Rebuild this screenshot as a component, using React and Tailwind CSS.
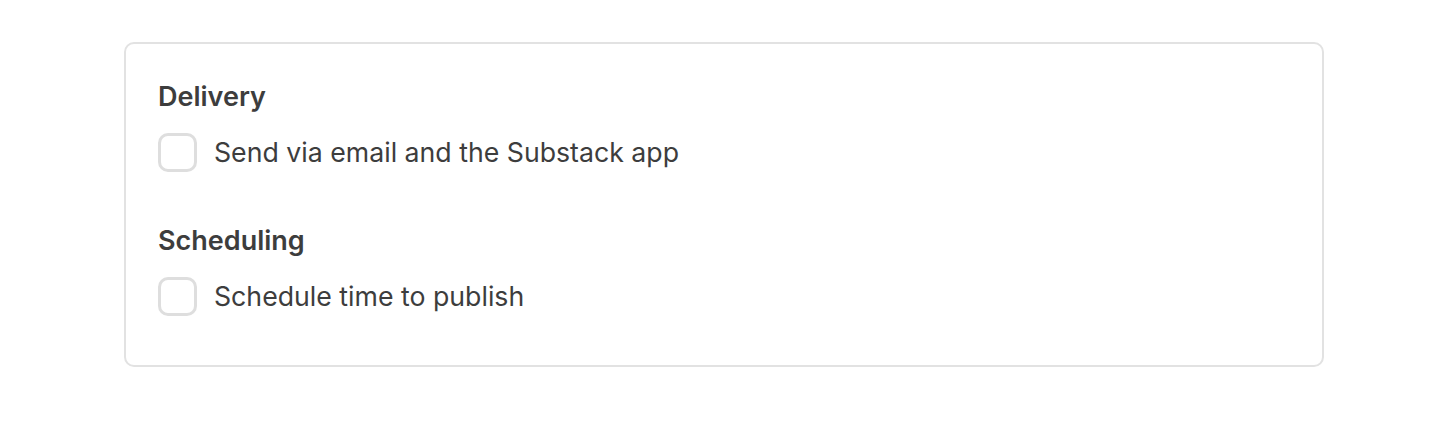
import React from 'react';

const Option = ({ label }) => (
  <label className="flex items-center gap-[17px] cursor-pointer">
    <span className="block h-[39px] w-[39px] shrink-0 rounded-[10px] border-[3px] border-[#dedede] bg-white" />
    <span className="text-[26.7px] leading-[39px] text-[#3d3d3d]">{label}</span>
  </label>
);

const Section = ({ title, label }) => (
  <div className="flex flex-col gap-[20px]">
    <h3 className="text-[27px] font-semibold leading-[32px] text-[#3d3d3d]">{title}</h3>
    <Option label={label} />
  </div>
);

export default function App() {
  return (
    <div className="min-h-[446px] bg-white pt-[42px] font-['Inter',sans-serif]">
      <div className="ml-[124px] w-[1200px] rounded-[10px] border-2 border-[#e2e2e2] px-[32px] pt-[37px] pb-[49px]">
        <div className="flex flex-col gap-[53px]">
          <Section title="Delivery" label="Send via email and the Substack app" />
          <Section title="Scheduling" label="Schedule time to publish" />
        </div>
      </div>
    </div>
  );
}
